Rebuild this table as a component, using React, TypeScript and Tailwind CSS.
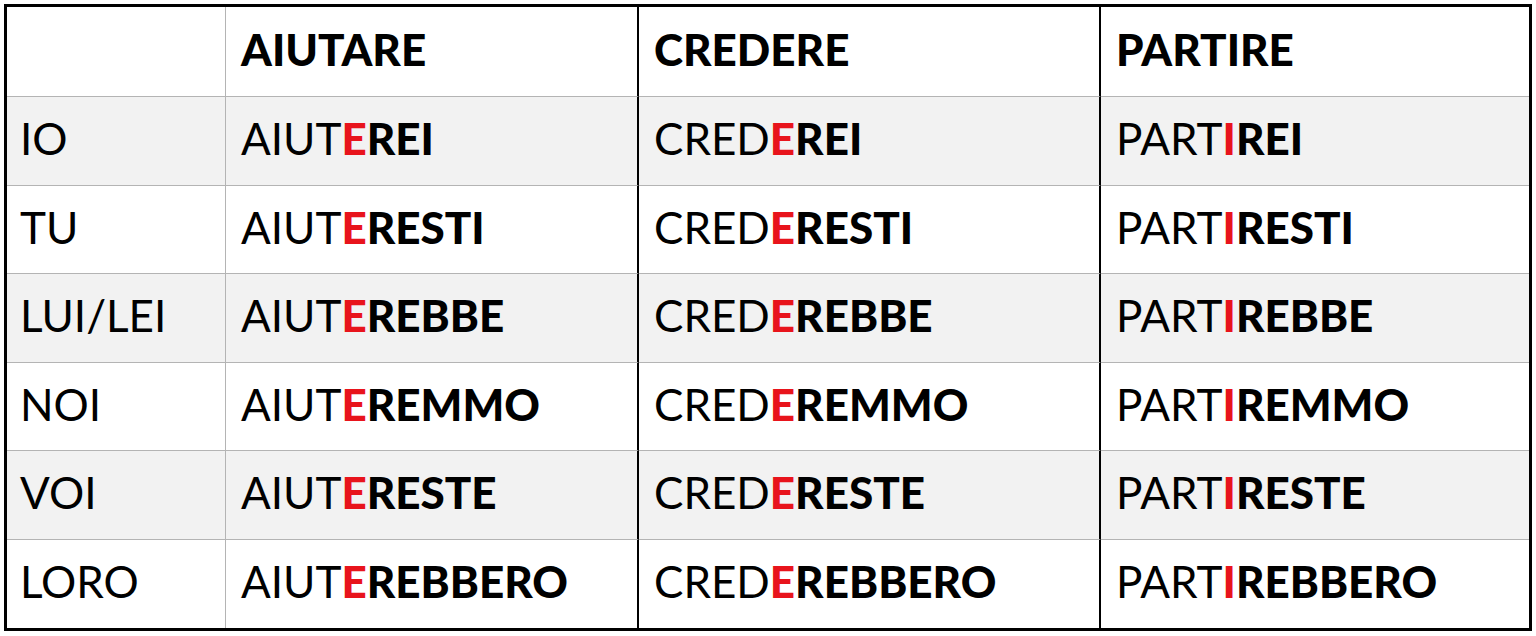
const verbs = [
  { name: "AIUTARE", stem: "AIUT", vowel: "E" },
  { name: "CREDERE", stem: "CRED", vowel: "E" },
  { name: "PARTIRE", stem: "PART", vowel: "I" },
];

const rows = [
  { subject: "IO", ending: "REI" },
  { subject: "TU", ending: "RESTI" },
  { subject: "LUI/LEI", ending: "REBBE" },
  { subject: "NOI", ending: "REMMO" },
  { subject: "VOI", ending: "RESTE" },
  { subject: "LORO", ending: "REBBERO" },
];

const colBorders = [
  "border-r border-r-[#b4b4b4]",
  "border-r-2 border-r-black",
  "border-r-2 border-r-black",
  "",
];

export default function App() {
  return (
    <div className="w-[1536px] h-[636px] bg-white pt-[4px] pl-[4px] font-['Lato','Noto_Sans',sans-serif] text-black">
      <div className="w-[1528px] h-[627px] border-[3px] border-black grid grid-cols-[219px_413px_462px_428px] grid-rows-[90px_repeat(6,1fr)]">
        <div className={`${colBorders[0]} border-b border-b-[#b4b4b4]`} />
        {verbs.map((v, i) => (
          <div
            key={v.name}
            className={`${colBorders[i + 1]} border-b border-b-[#b4b4b4] flex items-center pl-[15px] pb-[6px] text-[44px] font-black`}
          >
            {v.name}
          </div>
        ))}
        {rows.map((r, ri) => {
          const bg = ri % 2 === 0 ? "bg-[#f2f2f2]" : "bg-white";
          const bottom = ri < rows.length - 1 ? "border-b border-b-[#b4b4b4]" : "";
          return [
            <div key={r.subject} className={`${bg} ${bottom} ${colBorders[0]} flex items-center pl-[13px] pb-[5px] text-[44px] font-normal`}>
              {r.subject}
            </div>,
            ...verbs.map((v, i) => (
              <div
                key={r.subject + v.name}
                className={`${bg} ${bottom} ${colBorders[i + 1]} flex items-center pl-[15px] pb-[5px] text-[44px]`}
              >
                <span className="font-normal">{v.stem}</span>
                <span className="font-black text-[#e8141c]">{v.vowel}</span>
                <span className="font-black">{r.ending}</span>
              </div>
            )),
          ];
        })}
      </div>
    </div>
  );
}
